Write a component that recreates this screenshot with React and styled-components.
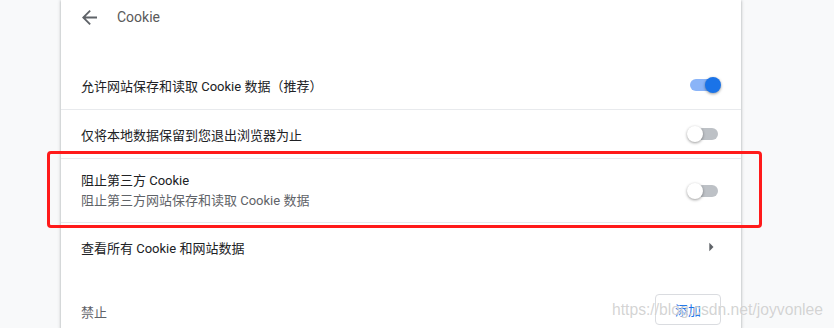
import React from "react";
import styled, { createGlobalStyle } from "styled-components";

const GlobalStyle = createGlobalStyle`
  html, body, #root {
    height: 100%;
    margin: 0;
  }
  body {
    background: #f8f9fa;
    overflow: hidden;
    font-family: Roboto, "Noto Sans CJK SC", sans-serif;
    font-size: 13px;
    color: #202124;
  }
`;

// page + card //
const Page = styled.div`
  position: relative;
  height: 100%;
  padding-left: 61px;
  box-sizing: border-box;
`;

const Card = styled.div`
  width: 680px;
  height: 100%;
  background: #fff;
  box-shadow: 0 1px 2px 0 rgba(60, 64, 67, 0.3), 0 1px 3px 1px rgba(60, 64, 67, 0.15);
`;

// header
const Header = styled.div`
  display: flex;
  align-items: center;
  height: 34px;
  padding-left: 21px;
  gap: 20px;
`;

const BackIcon = styled.svg`
  width: 15px;
  height: 15px;
  fill: #5f6368;
`;

const Title = styled.div`
  font-size: 14px;
  color: #5a5a5a;
  line-height: 20px;
`;

const List = styled.div`
  margin-top: 27px;
`;

const Row = styled.div`
  display: flex;
  align-items: center;
  justify-content: space-between;
  min-height: ${(p) => (p.$tall ? "63px" : "48px")};
  padding: 0 20px;
  border-top: ${(p) => (p.$first ? "none" : "1px solid #e8eaed")};
`;

const Label = styled.div`
  display: flex;
  flex-direction: column;
  line-height: 20px;
`;

const Primary = styled.div`
  color: #202124;
`;

const Secondary = styled.div`
  color: #5f6368;
`;

const Toggle = styled.div`
  position: relative;
  width: 34px;
  height: 16px;
  flex-shrink: 0;

  &::before {
    content: "";
    position: absolute;
    left: 3px;
    right: 3px;
    top: 2px;
    height: 12px;
    border-radius: 6px;
    background: ${(p) => (p.$on ? "#8ab4f8" : "#bdc1c6")};
  }

  &::after {
    content: "";
    position: absolute;
    top: 0;
    left: ${(p) => (p.$on ? "18px" : "0")};
    width: 16px;
    height: 16px;
    border-radius: 50%;
    background: ${(p) => (p.$on ? "#1a73e8" : "#fff")};
    box-shadow: 0 1px 3px 0 rgba(0, 0, 0, 0.4);
  }
`;

const SubArrow = styled.svg`
  width: 20px;
  height: 20px;
  fill: #5f6368;
`;

const SectionRow = styled.div`
  display: flex;
  justify-content: space-between;
  align-items: flex-start;
  padding: 23px 20px 0;
`;

const SectionLabel = styled.div`
  color: #5f6368;
  line-height: 16px;
  padding-top: 11px;
`;

const AddButton = styled.button`
  width: 66px;
  height: 31px;
  border: 1px solid #dadce0;
  border-radius: 4px;
  background: #fff;
  color: #1a73e8;
  font-family: Roboto, "Noto Sans CJK SC", sans-serif;
  font-size: 13px;
  padding: 0;
`;

// annotation over the list
const Highlight = styled.div`
  position: absolute;
  left: 47px;
  top: 151px;
  width: 709px;
  height: 71px;
  border: 3px solid #ff1a1a;
  border-radius: 4px;
  pointer-events: none;
`;

const Watermark = styled.div`
  position: absolute;
  left: 612px;
  top: 300px;
  font-family: "Liberation Sans", Arial, sans-serif;
  font-size: 15.7px;
  line-height: 20px;
  color: rgba(175, 175, 175, 0.55);
  text-shadow: 0 0 1px rgba(255, 255, 255, 0.9);
  white-space: nowrap;
`;

export default function App() {
  return (
    <>
      <GlobalStyle />
      <Page>
        <Card>
          <Header>
            <BackIcon viewBox="4 4 16 16">
              <path d="M20 11H7.83l5.59-5.59L12 4l-8 8 8 8 1.41-1.41L7.83 13H20v-2z" />
            </BackIcon>
            <Title>Cookie</Title>
          </Header>
          <List>
            <Row $first>
              <Primary>允许网站保存和读取 Cookie 数据（推荐）</Primary>
              <Toggle $on />
            </Row>
            <Row>
              <Primary>仅将本地数据保留到您退出浏览器为止</Primary>
              <Toggle />
            </Row>
            <Row $tall>
              <Label>
                <Primary>阻止第三方 Cookie</Primary>
                <Secondary>阻止第三方网站保存和读取 Cookie 数据</Secondary>
              </Label>
              <Toggle />
            </Row>
            <Row>
              <Primary>查看所有 Cookie 和网站数据</Primary>
              <SubArrow viewBox="0 0 24 24">
                <path d="M10 17l5-5-5-5v10z" />
              </SubArrow>
            </Row>
            <SectionRow>
              <SectionLabel>禁止</SectionLabel>
              <AddButton>添加</AddButton>
            </SectionRow>
          </List>
        </Card>
        <Highlight />
        <Watermark>https://blog.csdn.net/joyvonlee</Watermark>
      </Page>
    </>
  );
}
